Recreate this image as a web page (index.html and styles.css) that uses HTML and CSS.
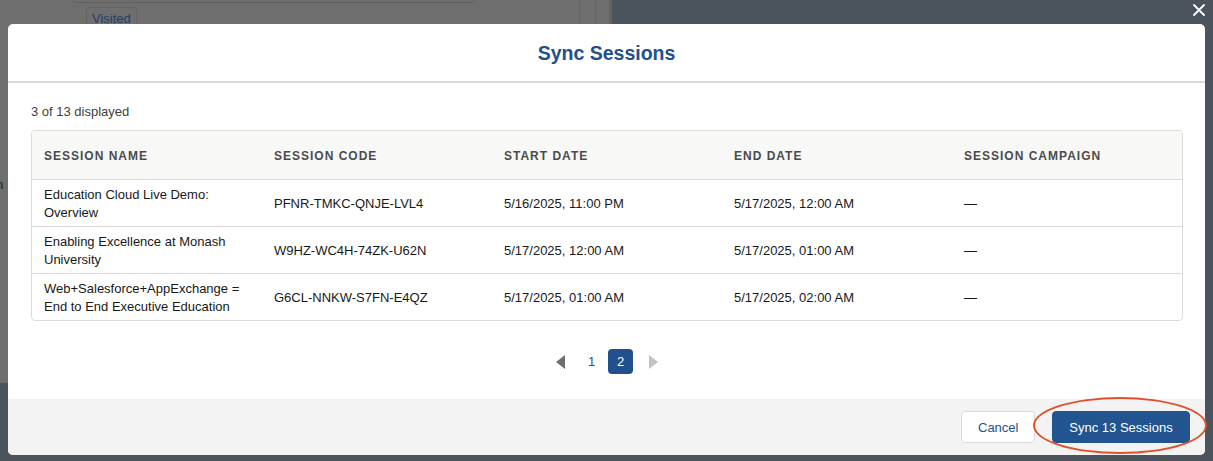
FILE: index.html
```html
<!DOCTYPE html>
<html>
<head>
	<meta charset="utf-8">
	<title>Sync Sessions</title>
	<link rel="stylesheet" href="styles.css">
</head>
<body>
	<div class="backdrop">
		<div class="under-page">
			<div class="under-card"></div>
			<span class="under-btn">Visited</span>
			<span class="under-letter">n</span>
			<div class="under-col c1"></div>
			<div class="under-col c2"></div>
		</div>
		<button class="close-x" title="Close">
			<svg width="12" height="12" viewBox="0 0 12 12"><path d="M1 1L11 11M11 1L1 11" stroke="#fff" stroke-width="1.8" stroke-linecap="round"/></svg>
		</button>
	</div>

	<div class="modal">
		<div class="modal-header">
			<h2>Sync Sessions</h2>
		</div>
		<div class="modal-body">
			<p class="count">3 of 13 displayed</p>
			<div class="table-wrap">
				<table>
					<thead>
						<tr>
							<th>Session Name</th>
							<th>Session Code</th>
							<th>Start Date</th>
							<th>End Date</th>
							<th>Session Campaign</th>
						</tr>
					</thead>
					<tbody>
						<tr>
							<td>Education Cloud Live Demo:<br>Overview</td>
							<td>PFNR-TMKC-QNJE-LVL4</td>
							<td>5/16/2025, 11:00 PM</td>
							<td>5/17/2025, 12:00 AM</td>
							<td>—</td>
						</tr>
						<tr>
							<td>Enabling Excellence at Monash<br>University</td>
							<td>W9HZ-WC4H-74ZK-U62N</td>
							<td>5/17/2025, 12:00 AM</td>
							<td>5/17/2025, 01:00 AM</td>
							<td>—</td>
						</tr>
						<tr>
							<td>Web+Salesforce+AppExchange =<br>End to End Executive Education</td>
							<td>G6CL-NNKW-S7FN-E4QZ</td>
							<td>5/17/2025, 01:00 AM</td>
							<td>5/17/2025, 02:00 AM</td>
							<td>—</td>
						</tr>
					</tbody>
				</table>
			</div>
			<div class="pager">
				<span class="arrow prev"></span>
				<span class="page">1</span>
				<span class="page current">2</span>
				<span class="arrow next"></span>
			</div>
		</div>
		<div class="modal-footer">
			<button class="btn btn-neutral">Cancel</button>
			<button class="btn btn-brand">Sync 13 Sessions</button>
		</div>
	</div>
	<div class="highlight"></div>
</body>
</html>
```

FILE: styles.css
```css
*{
	margin: 0;
	padding: 0;
	box-sizing: border-box;
}
html, body{
	width: 100%;
	height: 100%;
	overflow: hidden;
}
body{
	font-family: "Liberation Sans", Arial, sans-serif;
	color: #181818;
	background: #4b535d;
}

/* page behind the overlay */
.backdrop{
	position: relative;
	width: 100%;
	height: 100%;
}
.under-page{
	position: absolute;
	left: 0;
	top: 0;
	width: 612px;
	height: 383px;
	background: #6e6e6e;
	border-right: 3px solid #646464;
	overflow: hidden;
}
.under-card{
	position: absolute;
	left: 72px;
	top: -10px;
	width: 404px;
	height: 13px;
	border: 1px solid #626262;
	border-radius: 4px;
}
.under-btn{
	position: absolute;
	left: 86px;
	top: 7px;
	padding: 3px 5px;
	border: 1px solid #646464;
	border-radius: 3px;
	font-size: 13px;
	color: #1f3f66;
}
.under-letter{
	position: absolute;
	left: -4px;
	top: 177px;
	font-size: 13px;
	color: #222;
}
.under-col{
	position: absolute;
	top: 0;
	width: 1px;
	height: 100%;
	background: #646464;
}
.under-col.c1{ left: 579px; }
.under-col.c2{ left: 595px; }

.close-x{
	position: absolute;
	right: 8px;
	top: 4px;
	width: 12px;
	height: 12px;
	border: 0;
	background: none;
	display: flex;
}

/* modal */
.modal{
	position: absolute;
	left: 8px;
	top: 24px;
	width: 1197px;
	height: 431px;
	background: #fff;
	border-radius: 5px;
	overflow: hidden;
	display: flex;
	flex-direction: column;
}
.modal-header{
	height: 59px;
	border-bottom: 2px solid #dddbda;
	display: flex;
	align-items: center;
	justify-content: center;
}
.modal-header h2{
	font-size: 19.5px;
	font-weight: bold;
	color: #22508e;
	margin-top: 1px;
}
.modal-body{
	flex: 1;
	padding: 20px 22px 0 23px;
}
.count{
	font-size: 13px;
	line-height: 18px;
	color: #3e3e3c;
	margin-bottom: 9px;
}
.table-wrap{
	border: 1px solid #dddbda;
	border-radius: 4px;
	overflow: hidden;
}
table{
	width: 100%;
	border-collapse: collapse;
	table-layout: fixed;
}
th{
	height: 48px;
	background: #f8f8f7;
	text-align: left;
	padding: 2px 12px 0;
	font-size: 12px;
	font-weight: bold;
	letter-spacing: 1px;
	text-transform: uppercase;
	color: #4b4b4b;
	border-bottom: 1px solid #dddbda;
}
td{
	height: 47px;
	padding: 2px 12px 0;
	font-size: 13px;
	line-height: 18px;
	color: #181818;
	border-bottom: 1px solid #dddbda;
}
tbody tr:last-child td{
	border-bottom: 0;
}
.pager{
	margin-top: 28px;
	display: flex;
	justify-content: center;
	align-items: center;
}
.page{
	width: 25px;
	height: 25px;
	display: flex;
	align-items: center;
	justify-content: center;
	font-size: 13px;
	color: #22508e;
	border-radius: 4px;
}
.page.current{
	background: #22508e;
	color: #fff;
	margin-left: 4px;
}
.arrow{
	width: 0;
	height: 0;
	border-top: 7px solid transparent;
	border-bottom: 7px solid transparent;
}
.arrow.prev{
	border-right: 9px solid #706e6b;
	margin-right: 14px;
}
.arrow.next{
	border-left: 9px solid #c2c2c2;
	margin-left: 16px;
}
.modal-footer{
	height: 56px;
	background: #f3f3f3;
	display: flex;
	justify-content: flex-end;
	align-items: center;
	gap: 17px;
	padding: 0 15px 0 0;
}
.btn{
	height: 32px;
	border-radius: 4px;
	font-family: "Liberation Sans", Arial, sans-serif;
	font-size: 13px;
	padding: 0 16px;
}
.btn-neutral{
	width: 74px;
	background: #fff;
	border: 1px solid #dddbda;
	color: #22508e;
}
.btn-brand{
	width: 138px;
	background: #22548f;
	border: 1px solid #22548f;
	color: #fff;
}

/* red annotation ring around the sync button */
.highlight{
	position: absolute;
	left: 1033px;
	top: 397px;
	width: 174px;
	height: 57px;
	border: 2px solid #e0502c;
	border-radius: 50%;
}
```
